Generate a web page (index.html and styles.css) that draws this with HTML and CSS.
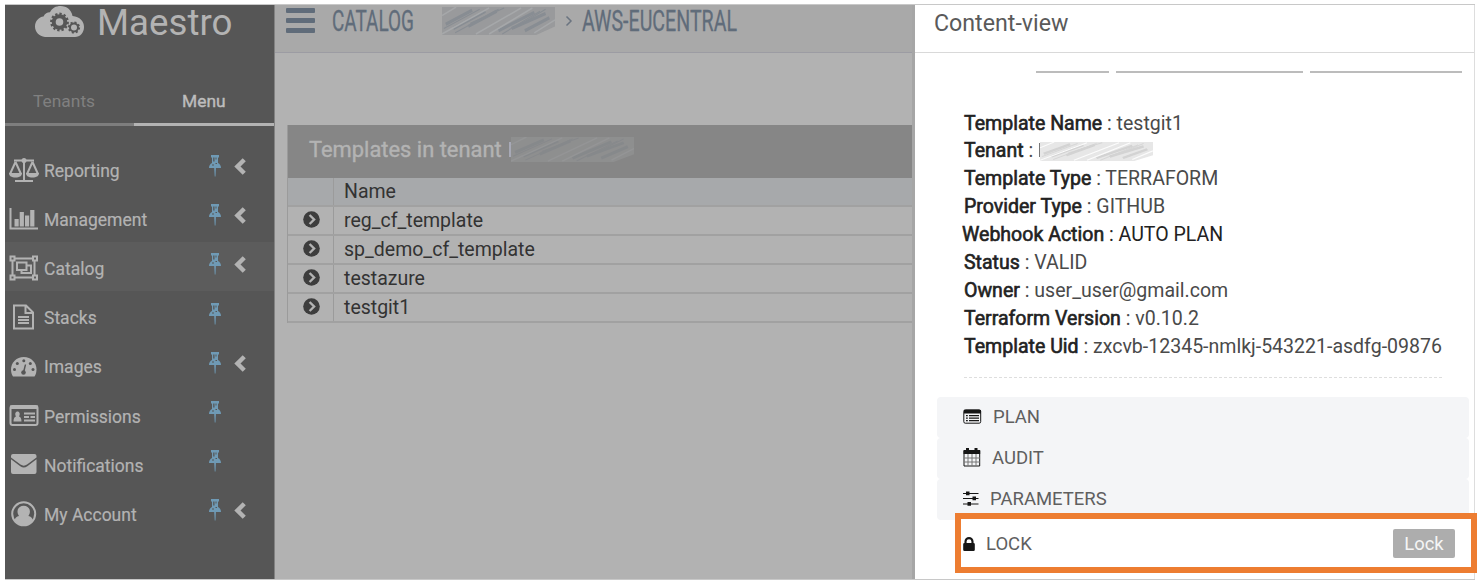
FILE: index.html
```html
<!DOCTYPE html>
<html lang="en">

<head>
    <meta charset="UTF-8">
    <meta name="viewport" content="width=device-width, initial-scale=1.0">
    <title>Maestro</title>
    <link rel="stylesheet" href="styles.css">
</head>

<body>
    <svg class="sprite">
        <symbol id="pin" viewBox="0 0 12 22">
            <path d="M2 0h8v2.200l-1 .6v5.200c1.800 1 3 2.600 3 5H0c0-2.400 1.200-4 3-5V2.800L2 2.200z" />
            <path d="M5.200 13h1.700L6.500 21.500h-.8z" />
            <path class="hole" d="M4.200 2.500h1.300v4H4.200zM6.500 2.500h1v2h-1zM3 9.500h2v1H3zM6.500 8H8v1H6.500z" />
        </symbol>
        <symbol id="left" viewBox="0 0 12 17">
            <path d="M8.700.3 11.800 3.300 6.500 8.500l5.300 5.200-3.100 3L.3 8.500z" />
        </symbol>
        <symbol id="go" viewBox="0 0 17 17">
            <circle cx="8.500" cy="8.500" r="8.300" />
            <path class="arrow" d="M6.600 4l4.500 4.500L6.600 13" />
        </symbol>
        <symbol id="scribble" viewBox="0 0 120 26" preserveAspectRatio="none">
            <path class="base" d="M0 0H120V18L100 26H0z" />
            <path class="dark" d="M4 16 32 3M12 20 46 4M28 18 58 4M60 22 98 5M74 20 110 6M88 22 114 10" />
            <path class="light" d="M0 25 50 1M36 25 84 1M50 25 96 1M98 24 120 12M0 8 15 0" />
            <path class="thin" d="M2 20 40 2M14 24 60 2M64 25 104 4M80 18 110 2M30 15 66 1" />
        </symbol>
    </svg>

    <div class="app">
        <nav class="sidebar">
            <div class="brand">
                <svg width="50" height="33" viewBox="0 0 50 33">
                    <path class="fill" d="M10 32C4 31 0 27 0 21.500 0 16 4 12 8.500 11.500 10 8 13 7 15 7.200 17 3 21 1 25.500 1c6.500 0 11 4 12 10C45 12 49 16 49 22c0 6-4 10-9 10z" />
                    <circle class="gear-teeth" cx="24.500" cy="17" r="7.900" />
                    <circle class="gear" cx="24.500" cy="17" r="5.800" />
                    <circle class="teeth2" cx="39" cy="22.500" r="5" />
                    <circle class="gear2" cx="39" cy="22.500" r="4" />
                </svg>
                <span>Maestro</span>
            </div>
            <div class="tabs">
                <div class="tab">Tenants</div>
                <div class="tab active">Menu</div>
            </div>
            <ul class="menu">
                <li>
                    <svg class="icon" width="32" height="26" viewBox="0 0 32 26">
                        <path class="line" d="M6 3.500h20M16 2v22M7 24h18M7.500 5 2 17M7.500 5 13 17M24.500 5 19 17M24.500 5 30 17" />
                        <path class="fill" d="M1 16h13c0 3-2.500 4.500-6.500 4.500S1 19 1 16zM18 16h13c0 3-2.500 4.500-6.500 4.500S18 19 18 16z" />
                        <circle class="fill" cx="16" cy="3.500" r="2.500" />
                    </svg>
                    <span class="label">Reporting</span>
                    <svg class="pin"><use href="#pin" /></svg>
                    <svg class="left"><use href="#left" /></svg>
                </li>
                <li>
                    <svg class="icon" width="32" height="26" viewBox="0 0 32 26">
                        <path class="line" d="M2.500 2v20.500h27.500" />
                        <path class="fill" d="M6.500 13h4.200v7.500H6.500zM11.700 6h4.200v14.500h-4.200zM17 9.500h4.200v11H17zM22.200 4h4.200v16.500h-4.200z" />
                    </svg>
                    <span class="label">Management</span>
                    <svg class="pin"><use href="#pin" /></svg>
                    <svg class="left"><use href="#left" /></svg>
                </li>
                <li class="selected">
                    <svg class="icon" width="32" height="26" viewBox="0 0 32 26">
                        <path class="line" d="M4.500 3.500h22v19h-22z" />
                        <path class="line" d="M9 7.500h9.500V15H9zM19.500 10.500H23V18h-9.500v-2" />
                        <path class="knot" d="M2.500 1.500h4v4h-4zM25 1.500h4v4h-4zM2.500 20.500h4v4h-4zM25 20.500h4v4h-4z" />
                    </svg>
                    <span class="label">Catalog</span>
                    <svg class="pin"><use href="#pin" /></svg>
                    <svg class="left"><use href="#left" /></svg>
                </li>
                <li>
                    <svg class="icon" width="32" height="26" viewBox="0 0 32 26">
                        <path class="line" d="M6 1.500h12L25 8.500v16H6zM17.500 2v7H25M10 13h11M10 16h11M10 19h11" />
                    </svg>
                    <span class="label">Stacks</span>
                    <svg class="pin"><use href="#pin" /></svg>
                </li>
                <li>
                    <svg class="icon" width="32" height="26" viewBox="0 0 32 26">
                        <path class="fill" d="M5 23.500C3.600 21.500 3 19 3 16.500 3 9.500 8.500 4 15.800 4s12.700 5.500 12.700 12.500c0 2.500-.6 5-2 7z" />
                        <g class="dots">
                            <circle cx="6.500" cy="16.500" r="1.500" />
                            <circle cx="9.300" cy="10.500" r="1.500" />
                            <circle cx="15.800" cy="7.700" r="1.500" />
                            <circle cx="22.300" cy="10.500" r="1.500" />
                            <circle cx="25" cy="16.500" r="1.500" />
                            <circle cx="15.500" cy="19.500" r="2.300" />
                            <path d="M16.800 11.500h1.400L16.500 19h-1.700z" />
                        </g>
                    </svg>
                    <span class="label">Images</span>
                    <svg class="pin"><use href="#pin" /></svg>
                    <svg class="left"><use href="#left" /></svg>
                </li>
                <li>
                    <svg class="icon" width="32" height="26" viewBox="0 0 32 26">
                        <rect class="line" x="2.500" y="3" width="27" height="19" rx="2" />
                        <path class="fill" d="M2 2.500h28V6H2zM5.500 18.500c0-3 1-4.500 2.500-5-1.500-2.500-.5-5 1.500-5s3 2.500 1.500 5c1.500.5 2.500 2 2.500 5zM16 9.500h11v2H16zM16 13h5v2h-5zM22.500 13H27v2h-4.500zM16 16.500h11v2H16z" />
                    </svg>
                    <span class="label">Permissions</span>
                    <svg class="pin"><use href="#pin" /></svg>
                </li>
                <li>
                    <svg class="icon" width="32" height="26" viewBox="0 0 32 26">
                        <path class="fill" d="M3 4q0-2 2-2h21.500q2 0 2 2v1.500l-9.500 7q-3.200 2.300-6.500 0L3 5.500zM3 7.200l9.300 7q3.500 2.500 7 0l9.200-7V20q0 2-2 2H5q-2 0-2-2z" />
                    </svg>
                    <span class="label">Notifications</span>
                    <svg class="pin"><use href="#pin" /></svg>
                </li>
                <li>
                    <svg class="icon" width="32" height="26" viewBox="0 0 32 26">
                        <circle class="line" cx="15.700" cy="12.800" r="11.500" />
                        <path class="fill" d="M6.500 19.800c.5-3 2-4.500 4.500-4.800C7.500 9.800 10.500 4.800 15.700 4.800s8.200 5 4.700 10.200c2.500.3 4 1.800 4.500 4.800-2.500 3-5.500 4.500-9.200 4.500s-6.700-1.500-9.200-4.500z" />
                    </svg>
                    <span class="label">My Account</span>
                    <svg class="pin"><use href="#pin" /></svg>
                    <svg class="left"><use href="#left" /></svg>
                </li>
            </ul>
        </nav>

        <main class="main">
            <header class="topbar">
                <div class="burger"><i></i><i></i><i></i></div>
                <svg class="crumb" width="82" height="46"><text x="0" y="26" textLength="82" lengthAdjust="spacingAndGlyphs">CATALOG</text></svg>
                <svg class="scribble blue"><use href="#scribble" /></svg>
                <svg class="next" width="8" height="12" viewBox="0 0 8 12"><path d="M1.500 1.500 6 6l-4.500 4.500" /></svg>
                <svg class="crumb" width="156" height="46"><text x="0" y="26" textLength="155" lengthAdjust="spacingAndGlyphs">AWS-EUCENTRAL</text></svg>
            </header>
            <section class="templates">
                <div class="title">
                    <span>Templates in tenant</span>
                    <i class="cut"></i>
                    <svg class="scribble grey"><use href="#scribble" /></svg>
                </div>
                <div class="row head"><div class="cell"></div><div class="name">Name</div></div>
                <div class="row"><div class="cell"><svg class="go"><use href="#go" /></svg></div><div class="name">reg_cf_template</div></div>
                <div class="row"><div class="cell"><svg class="go"><use href="#go" /></svg></div><div class="name">sp_demo_cf_template</div></div>
                <div class="row"><div class="cell"><svg class="go"><use href="#go" /></svg></div><div class="name">testazure</div></div>
                <div class="row"><div class="cell"><svg class="go"><use href="#go" /></svg></div><div class="name">testgit1</div></div>
            </section>
        </main>

        <aside class="drawer">
            <h2>Content-view</h2>
            <div class="lines"><i class="l1"></i><i class="l2"></i><i class="l3"></i></div>
            <div class="info">
                <p><b>Template Name</b> : testgit1</p>
                <p><b>Tenant</b> : <i class="cut"></i><svg class="scribble white"><use href="#scribble" /></svg></p>
                <p><b>Template Type</b> : TERRAFORM</p>
                <p><b>Provider Type</b> : GITHUB</p>
                <p class="webhook"><b>Webhook Action</b> : AUTO PLAN</p>
                <p><b>Status</b> : VALID</p>
                <p><b>Owner</b> : user_user@gmail.com</p>
                <p><b>Terraform Version</b> : v0.10.2</p>
                <p><b>Template Uid</b> : zxcvb-12345-nmlkj-543221-asdfg-09876</p>
            </div>
            <div class="actions">
                <div class="action">
                    <svg width="19" height="15" viewBox="0 0 19 15">
                        <rect class="stroke" x=".8" y=".8" width="16.900" height="13.400" rx="1.500" />
                        <path d="M1 1h17v3.500H1zM3 6h1.800v1.300H3zM3 8.500h1.800v1.300H3zM3 11h1.800v1.300H3zM6 6h10v1.300H6zM6 8.500h10v1.300H6zM6 11h10v1.300H6z" />
                    </svg>
                    <span>PLAN</span>
                </div>
                <div class="action">
                    <svg width="18" height="19" viewBox="0 0 18 19">
                        <path d="M.5 2h16.700v4H.5zM3 0h3v4H3zM11.500 0h3v4h-3z" />
                        <path class="stroke" d="M1 3v15h15.700V3" />
                        <path class="grid" d="M1 10h16M1 14h16M5 6v12M9 6v12M13 6v12" />
                    </svg>
                    <span>AUDIT</span>
                </div>
                <div class="action">
                    <svg width="16" height="15" viewBox="0 0 16 15">
                        <path d="M0 2h15.500v1H0zM0 7h15.500v1H0zM0 12.500h15.500v1H0zM3 .5h3.500v3.800H3zM9.500 5.500H13v3.800H9.500zM4.500 11H8v3.800H4.500z" />
                    </svg>
                    <span>PARAMETERS</span>
                </div>
                <div class="action lock">
                    <svg width="12" height="16" viewBox="0 0 12.400 16">
                        <path d="M1.500 7V5.500a4.700 4.700 0 0 1 9.400 0V7q1.300 0 1.300 1.200v5.800q0 1.300-1.300 1.300H1.500Q.2 15.300.2 14V8.200Q.2 7 1.500 7zM3.700 7h5V5.500a2.500 2.500 0 0 0-5 0z" />
                    </svg>
                    <span>LOCK</span>
                    <button>Lock</button>
                </div>
            </div>
        </aside>
    </div>
</body>

</html>
```

FILE: styles.css
```css
* {
    margin: 0;
    padding: 0;
    box-sizing: border-box;
    font-family: Roboto, sans-serif;
}

body {
    background: white;
    height: 581px;
    overflow: hidden;
}

.sprite {
    display: none;
}

.app {
    display: flex;
    width: 1470px;
    height: 576px;
    margin: 4px 0 0 5px;
    border-top: 1px solid #c8c8c8;
    border-bottom: 1px solid #c8c8c8;
}

/* sidebar */
.sidebar {
    width: 270px;
    background: #565656;
    border-right: 1px solid #828282;
    color: #b3b3b3;
}

.brand {
    display: flex;
    height: 71px;
    padding-left: 30px;
    font-size: 36.7px;
    line-height: 36px;
}

.brand span {
    margin-left: 12px;
}

.fill {
    fill: #b3b3b3;
}

.gear {
    fill: none;
    stroke: #565656;
    stroke-width: 4;
}

.gear-teeth {
    fill: none;
    stroke: #565656;
    stroke-width: 3;
    stroke-dasharray: 2.2 1.9;
}

.gear2 {
    fill: none;
    stroke: #565656;
    stroke-width: 2;
}

.teeth2 {
    fill: none;
    stroke: #565656;
    stroke-width: 2.2;
    stroke-dasharray: 2 1.9;
}

.tabs {
    display: flex;
    height: 50px;
    font-size: 17.4px;
}

.tab {
    width: 129px;
    height: 50px;
    padding: 15px 0 0 28px;
    color: #808080;
    border-bottom: 3px solid #7e7e7e;
}

.tab.active {
    width: 140px;
    padding-left: 48px;
    color: #bdbdbd;
    border-color: #b3b3b3;
    -webkit-text-stroke: 0.4px;
}

.menu {
    list-style: none;
    padding-top: 17.5px;
}

.menu li {
    display: flex;
    align-items: center;
    height: 49.2px;
    padding-left: 3px;
    font-size: 17.5px;
}

.menu .selected {
    background: #5c5c5c;
}

.icon {
    margin-top: 3px;
}

.label {
    width: 165px;
    margin: 5px 0 0 4px;
    -webkit-text-stroke: 0.2px;
}

.line {
    fill: none;
    stroke: #b3b3b3;
    stroke-width: 2;
}

.knot {
    fill: #5c5c5c;
    stroke: #b3b3b3;
    stroke-width: 2;
}

.dots {
    fill: #565656;
}

.pin {
    width: 12px;
    height: 22px;
    margin-top: -4px;
    fill: #6f9ab5;
}

.hole {
    fill: #565656;
}

.left {
    width: 12px;
    height: 17px;
    margin: -3px 0 0 13px;
    fill: #b3b3b3;
}

/* main part */
.main {
    width: 640px;
    background: #b2b2b2;
    border-right: 3px solid #a6a6a6;
}

.topbar {
    display: flex;
    align-items: flex-start;
    height: 48px;
    padding-left: 11px;
    background: #a9a9a9;
    border-bottom: 1px solid #9c9ca3;
}

.burger {
    display: flex;
    flex-direction: column;
    gap: 5px;
    width: 29px;
    margin: 3px 17px 0 0;
}

.burger i {
    height: 5px;
    border-radius: 1px;
    background: #606c7a;
}

.crumb {
    overflow: visible;
    font-size: 29px;
    fill: #606c7a;
    stroke: #606c7a;
    stroke-width: 0.3;
}

.scribble {
    flex: none;
}

.base {
    fill: #999a9c;
}

.dark,
.light,
.thin {
    fill: none;
    stroke: #888d93;
    stroke-width: 3;
}

.light {
    stroke: #a6a8aa;
    stroke-width: 1.5;
}

.thin {
    stroke-width: 1;
}

.blue {
    width: 113px;
    height: 28px;
    margin: 2px 10px 0 28px;
}

.grey {
    width: 123px;
    height: 25px;
    opacity: 0.45;
}

.white {
    width: 113px;
    height: 19px;
    filter: brightness(1.5) grayscale(1);
    vertical-align: -4px;
}

.next {
    margin: 10px 9px 0 0;
    fill: none;
    stroke: #6b7480;
    stroke-width: 1.5;
}

.templates {
    margin: 72px 0 0 12px;
    border-left: 1px solid #9b9b9b;
}

.title {
    display: flex;
    align-items: center;
    height: 53px;
    padding: 0 0 4px 21px;
    background: #868686;
    color: #b3b3b3;
    font-size: 21.9px;
    -webkit-text-stroke: 0.4px;
}

.title .cut {
    width: 2px;
    height: 15px;
    margin-left: 7px;
    background: #a7a9b6;
}

.row {
    display: flex;
    height: 29px;
    border-bottom: 2px solid #a1a1a1;
    color: #333;
    font-size: 19.5px;
    line-height: 28px;
}

.row.head {
    background: #a7a9ab;
}

.cell {
    width: 46px;
    padding: 4px 0 0 15px;
    border-right: 1px solid #9b9b9b;
}

.go {
    display: block;
    width: 17px;
    height: 17px;
    fill: #3d3d3d;
}

.arrow {
    fill: none;
    stroke: #b2b2b2;
    stroke-width: 2.4;
}

.name {
    padding-left: 10px;
}

/* content view */
.drawer {
    width: 560px;
    background: white;
    border-right: 1px solid #ddd;
}

.drawer h2 {
    height: 48px;
    padding-left: 19px;
    border-bottom: 1px solid #d9d9d9;
    color: #5a5a5a;
    font-size: 23.2px;
    font-weight: 400;
    line-height: 36px;
}

.lines {
    display: flex;
    gap: 7px;
    padding: 18px 0 0 121px;
}

.lines i {
    height: 2px;
    background: #bcbcbc;
}

.l1 {
    width: 73px;
}

.l2 {
    width: 187px;
}

.l3 {
    width: 152px;
}

.info {
    width: 478px;
    height: 305px;
    margin-left: 49px;
    padding-top: 36.5px;
    border-bottom: 1px dashed #dedede;
    color: #4a4a4a;
    font-size: 19.55px;
    line-height: 27.93px;
    white-space: nowrap;
}

.info p {
    height: 27.93px;
}

.info b {
    color: #222;
    font-weight: 400;
    -webkit-text-stroke: 0.6px;
}

.info .webhook {
    margin-left: -2px;
    color: #222;
}

.info .cut {
    display: inline-block;
    width: 1px;
    height: 14px;
    margin-left: 1px;
    background: #777;
}

.actions {
    padding: 19px 5px 0 22px;
}

.action {
    display: flex;
    align-items: center;
    gap: 11px;
    height: 41px;
    padding: 0 0 2px 26px;
    border-radius: 4px;
    background: #f4f5f7;
    color: #5f5f5f;
    font-size: 18.5px;
}

.action svg {
    fill: #161616;
}

.stroke,
.grid {
    fill: none;
    stroke: #161616;
    stroke-width: 1;
}

.grid {
    stroke: #777;
}

/* the highlighted row sticks out over the right edge */
.lock {
    position: relative;
    width: 522px;
    height: 60px;
    margin: -7px 0 0 18px;
    padding: 1px 16px 0 2px;
    border: 6px solid #ed7d31;
    border-radius: 0;
    background: white;
}

.lock button {
    width: 62px;
    height: 29px;
    margin-left: auto;
    border: none;
    border-radius: 2px;
    background: #adadad;
    color: #f5f5f5;
    font-size: 18.4px;
}
```
